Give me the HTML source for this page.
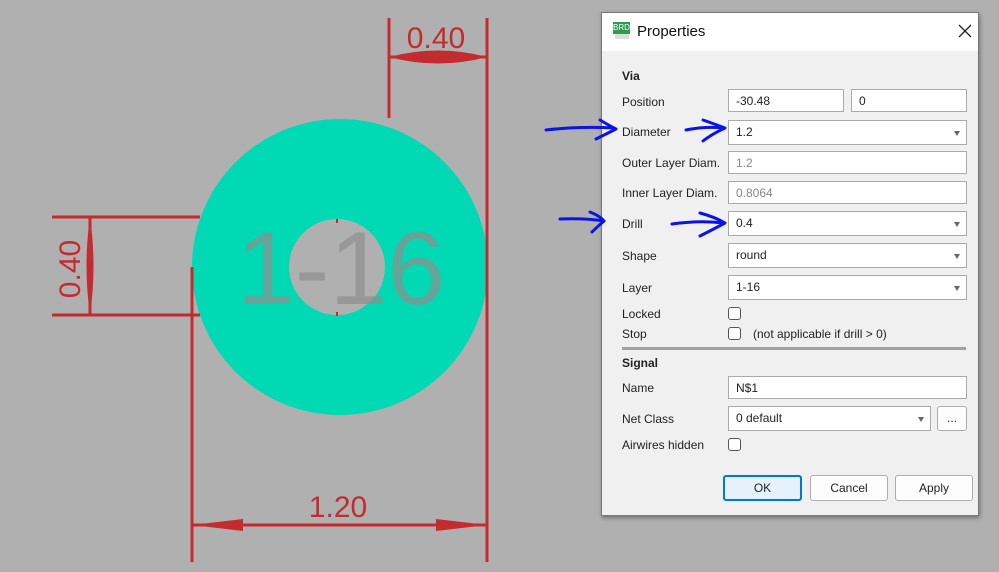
<!DOCTYPE html>
<html><head><style>
body{margin:0;width:999px;height:572px;background:#b0b0b0;position:relative;overflow:hidden;font-family:"Liberation Sans",sans-serif}
.dlg{position:absolute;left:601px;top:12px;width:378px;height:504px;background:#f0f0f0;border:1px solid #777;box-sizing:border-box;box-shadow:1px 2px 4px rgba(0,0,0,.35)}
.tb{position:absolute;left:0;top:0;right:0;height:38px;background:#fff}
.a{position:absolute;font-size:12px;color:#222}
.in{position:absolute;background:#fff;border:1px solid #aaa;box-sizing:border-box;font-size:12px;color:#222;padding:4px 0 0 7px}
.in.g{color:#888}
.dd::after{content:"";position:absolute;right:6px;top:10px;border-left:3px solid transparent;border-right:3px solid transparent;border-top:5px solid #666}
.cb{position:absolute;width:13px;height:13px;border:1px solid #555;border-radius:3px;background:#fff;box-sizing:border-box}
.bt{position:absolute;height:26px;border:1px solid #adadad;border-radius:3px;background:#fdfdfd;box-sizing:border-box;font-size:12px;text-align:center;line-height:24px;color:#222}
</style></head><body>
<svg width="999" height="572" style="position:absolute;left:0;top:0">
<circle cx="340" cy="267" r="148" fill="#00d9b4"/>
<circle cx="337" cy="267" r="48" fill="#b0b0b0"/>
<text x="341" y="304" font-family="Liberation Sans" font-size="104" fill="#8e8e8e" fill-opacity="0.7" text-anchor="middle">1-16</text>
<g stroke="#c42b2f" stroke-width="3" fill="none">
<line x1="389" y1="18" x2="389" y2="118"/>
<line x1="487" y1="18" x2="487" y2="562"/>
<line x1="192" y1="267" x2="192" y2="562"/>
<line x1="52" y1="217" x2="200" y2="217"/>
<line x1="52" y1="315" x2="200" y2="315"/>
<line x1="90" y1="217" x2="90" y2="315"/>
<line x1="389" y1="57" x2="487" y2="57"/>
<line x1="192" y1="525" x2="487" y2="525"/>
</g>
<g fill="#c42b2f">
<path d="M389 57 Q438 44 487 57 Q438 70 389 57Z"/>
<path d="M90 217 Q97 266 90 315 Q83 266 90 217Z"/>
<path d="M192 525 L243 519 L243 531Z"/><path d="M487 525 L436 519 L436 531Z"/>
<rect x="336" y="219" width="2" height="4"/><rect x="336" y="312" width="2" height="4"/>
</g>
<g font-family="Liberation Sans" font-size="30" fill="#c42b2f" text-anchor="middle">
<text x="436" y="48">0.40</text>
<text x="338" y="517">1.20</text>
<text transform="translate(80 269) rotate(-90)">0.40</text>
</g>
</svg>
<div class="dlg">
<div class="tb">
<div style="position:absolute;left:11px;top:9px;width:17px;height:12px;background:#2e9e4e;color:#fff;font-size:8px;line-height:12px;text-align:center">BRD</div>
<div style="position:absolute;left:13px;top:21px;width:14px;height:5px;background:#ddd"></div>
<div class="a" style="left:35px;top:10px;font-size:15px;color:#111">Properties</div>
<svg style="position:absolute;left:356px;top:11px" width="14" height="14"><path d="M1 1L13 13M13 1L1 13" stroke="#222" stroke-width="1.3"/></svg>
</div>
<div class="a" style="left:20px;top:56px;font-weight:bold">Via</div>
<div class="a" style="left:20px;top:82px">Position</div>
<div class="in" style="left:126px;top:76px;width:116px;height:23px">-30.48</div>
<div class="in" style="left:249px;top:76px;width:116px;height:23px">0</div>
<div class="a" style="left:20px;top:112px">Diameter</div>
<div class="in dd" style="left:126px;top:107px;width:239px;height:25px">1.2</div>
<div class="a" style="left:20px;top:143px">Outer Layer Diam.</div>
<div class="in g" style="left:126px;top:138px;width:239px;height:23px">1.2</div>
<div class="a" style="left:20px;top:173px">Inner Layer Diam.</div>
<div class="in g" style="left:126px;top:168px;width:239px;height:23px">0.8064</div>
<div class="a" style="left:20px;top:204px">Drill</div>
<div class="in dd" style="left:126px;top:198px;width:239px;height:25px">0.4</div>
<div class="a" style="left:20px;top:236px">Shape</div>
<div class="in dd" style="left:126px;top:230px;width:239px;height:25px">round</div>
<div class="a" style="left:20px;top:268px">Layer</div>
<div class="in dd" style="left:126px;top:262px;width:239px;height:25px">1-16</div>
<div class="a" style="left:20px;top:294px">Locked</div>
<div class="cb" style="left:126px;top:294px"></div>
<div class="a" style="left:20px;top:314px">Stop</div>
<div class="cb" style="left:126px;top:314px"></div>
<div class="a" style="left:151px;top:314px">(not applicable if drill &gt; 0)</div>
<div style="position:absolute;left:20px;top:334px;width:344px;height:3px;background:#a0a0a0"></div>
<div class="a" style="left:20px;top:343px;font-weight:bold">Signal</div>
<div class="a" style="left:20px;top:368px">Name</div>
<div class="in" style="left:126px;top:363px;width:239px;height:23px">N$1</div>
<div class="a" style="left:20px;top:399px">Net Class</div>
<div class="in dd" style="left:126px;top:393px;width:203px;height:25px">0 default</div>
<div class="bt" style="left:335px;top:393px;width:30px;height:25px;line-height:22px">...</div>
<div class="a" style="left:20px;top:425px">Airwires hidden</div>
<div class="cb" style="left:126px;top:425px"></div>
<div class="bt" style="left:121px;top:462px;width:79px;background:#e5f1fb;border:2px solid #0078d7;line-height:22px">OK</div>
<div class="bt" style="left:208px;top:462px;width:78px">Cancel</div>
<div class="bt" style="left:293px;top:462px;width:78px">Apply</div>
</div>
<svg width="999" height="572" style="position:absolute;left:0;top:0">
<g stroke="#0b14e6" stroke-width="3" fill="none" stroke-linecap="round" stroke-linejoin="round">
<path d="M546 130 Q580 126 614 128 M600 120 Q610 126 616 129 Q606 134 596 139"/>
<path d="M686 130 Q705 126 724 128 M703 120 Q720 126 725 128 Q712 134 703 141"/>
<path d="M560 219 Q585 218 604 221 M590 212 Q600 216 604 221 Q598 226 592 232"/>
<path d="M672 224 Q700 220 724 223 M700 213 Q715 217 725 223 Q712 230 700 236"/>
</g>
</svg>
</body></html>
